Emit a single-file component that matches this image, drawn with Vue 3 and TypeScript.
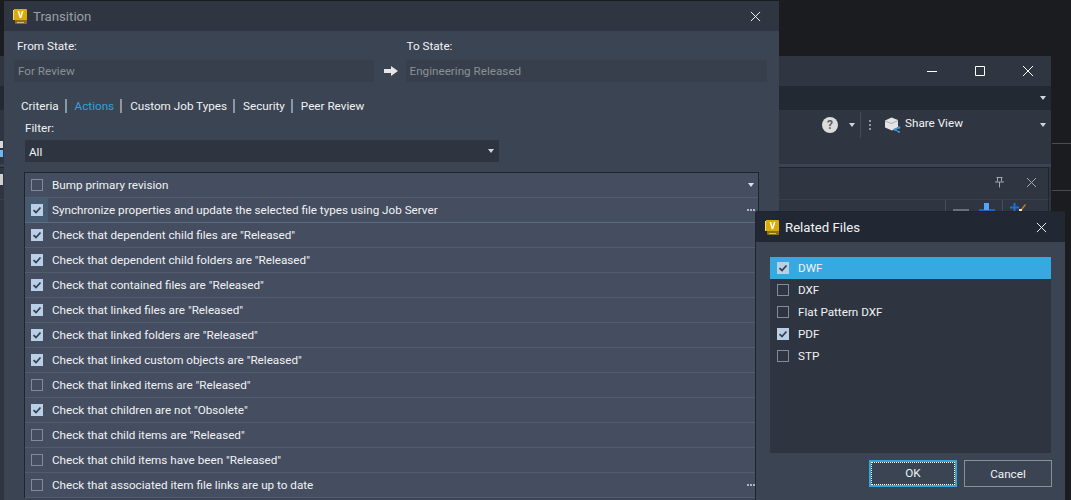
<script setup lang="ts">
interface Action {
  label: string;
  checked: boolean;
  more?: 'caret' | 'dots';
}

const tabs = ['Criteria', 'Actions', 'Custom Job Types', 'Security', 'Peer Review'];

const actions: Action[] = [
  { label: 'Bump primary revision', checked: false, more: 'caret' },
  { label: 'Synchronize properties and update the selected file types using Job Server', checked: true, more: 'dots' },
  { label: 'Check that dependent child files are "Released"', checked: true },
  { label: 'Check that dependent child folders are "Released"', checked: true },
  { label: 'Check that contained files are "Released"', checked: true },
  { label: 'Check that linked files are "Released"', checked: true },
  { label: 'Check that linked folders are "Released"', checked: true },
  { label: 'Check that linked custom objects are "Released"', checked: true },
  { label: 'Check that linked items are "Released"', checked: false },
  { label: 'Check that children are not "Obsolete"', checked: true },
  { label: 'Check that child items are "Released"', checked: false },
  { label: 'Check that child items have been "Released"', checked: false },
  { label: 'Check that associated item file links are up to date', checked: false, more: 'dots' },
];

const fileTypes = [
  { label: 'DWF', checked: true },
  { label: 'DXF', checked: false },
  { label: 'Flat Pattern DXF', checked: false },
  { label: 'PDF', checked: true },
  { label: 'STP', checked: false },
];
</script>

<template>
  <div class="desktop">
    <!-- main application window behind the dialogs -->
    <section class="window app">
      <header class="app-title">
        <svg class="win-btn" viewBox="0 0 12 12"><path d="M1 6.500h10" /></svg>
        <svg class="win-btn" viewBox="0 0 12 12"><path d="M1.500 1.500h9v9h-9z" /></svg>
        <svg class="win-btn" viewBox="0 0 12 12"><path d="M1 1l10 10M11 1L1 11" /></svg>
      </header>
      <div class="app-menu"><i class="caret"></i></div>
      <div class="app-tools">
        <span class="help">?</span>
        <i class="caret small"></i>
        <span class="tool-sep"></span>
        <span class="grip"><b></b><b></b><b></b></span>
        <svg class="share-icon" viewBox="0 0 17 17">
          <path d="M1 4.500 7.500 1.500 14 4v7l-6 3.500-7-3z" fill="#e3e3e3" />
          <path d="M1 4.500 7.500 7 14 4v1L7.500 8 1 5.500z" fill="#a9abae" />
          <path d="M15 11.500 11 13.500 15 16" fill="none" stroke="#3f9be0" stroke-width="1.200" />
          <circle cx="15" cy="11.500" r="1.300" fill="#3f9be0" />
          <circle cx="11" cy="13.500" r="1.300" fill="#3f9be0" />
          <circle cx="15" cy="16" r="1" fill="#3f9be0" />
        </svg>
        <span class="share-label">Share View</span>
        <i class="caret push"></i>
      </div>
      <div class="app-panel">
        <div class="panel-head">
          <svg class="pin" viewBox="0 0 11 11"><path d="M2.500.5h6M3.500.5v4M7.500.5v4M1 5h9M5.500 5v5.500" /></svg>
          <svg class="panel-close" viewBox="0 0 11 11"><path d="M1 1l9 9M10 1 1 10" /></svg>
        </div>
        <div class="panel-tools">
          <span class="tool-div"></span>
          <span class="tool-minus"></span>
          <svg class="tool-up" viewBox="0 0 16 8">
            <path d="M0 6h16v2H0z" fill="#1c64c4" />
            <path d="M5 0h5v7H5z" fill="#56a5f2" />
          </svg>
          <span class="tool-div"></span>
          <svg class="tool-add" viewBox="0 0 16 8">
            <path d="M0 3.500h9v2H0zM3.500 0h2v8h-2z" fill="#1c6fd8" />
            <path d="M11 6l4-5 1 1-4 5z" fill="#c67a3a" />
            <path d="M9 6h3v2H9z" fill="#f3e6b0" />
          </svg>
        </div>
      </div>
    </section>

    <span class="desk-line first"></span>
    <span class="desk-line second"></span>
    <span class="edge-chip white"></span>
    <span class="edge-chip blue"></span>
    <span class="edge-chip glyph"></span>

    <!-- Transition dialog -->
    <section class="window transition">
      <header class="title-bar">
        <svg class="vault-logo" viewBox="0 0 15 16">
          <path d="M1 2h1v10H1z" fill="#f0d98a" />
          <path d="M2 1h12a1 1 0 0 1 1 1v10H2z" fill="#dcaa06" />
          <path d="M3 12h12v3a1 1 0 0 1-1 1H4a1 1 0 0 1-1-1z" fill="#8c7114" />
          <path d="M5 14h7v1H5z" fill="#c9bd8c" />
          <path d="M5.500 3h1.700l1.300 5 1.300-5h1.700l-2.200 7H7.700z" fill="#fff" />
        </svg>
        <h1 class="dim-title">Transition</h1>
        <svg class="close" viewBox="0 0 12 12"><path d="M1 1l10 10M11 1 1 11" /></svg>
      </header>

      <div class="transition-body">
        <div class="states">
          <div class="state from">
            <label>From State:</label>
            <div class="state-input">For Review</div>
          </div>
          <svg class="state-arrow" viewBox="0 0 14 10"><path d="M0 3h7V0l7 5-7 5V7H0z" /></svg>
          <div class="state to">
            <label>To State:</label>
            <div class="state-input">Engineering Released</div>
          </div>
        </div>

        <nav class="tabs">
          <template v-for="(tab, i) in tabs" :key="tab">
            <span class="tab" :class="{ active: tab === 'Actions' }">{{ tab }}</span>
            <span v-if="i < tabs.length - 1" class="tab-sep"></span>
          </template>
        </nav>

        <div class="filter">
          <label>Filter:</label>
          <div class="select"><span class="select-text">All</span><i class="caret"></i></div>
        </div>

        <div class="grid">
          <div v-for="(row, i) in actions" :key="row.label" class="grid-row" :class="{ current: i === 1 }">
            <span class="check-cell">
              <span class="check" :class="{ on: row.checked }">
                <svg v-if="row.checked" viewBox="0 0 12 12"><path d="M2.500 6.200 5 8.500l4.500-5" /></svg>
              </span>
            </span>
            <span class="grid-label">{{ row.label }}</span>
            <i v-if="row.more === 'caret'" class="caret pale"></i>
            <span v-else-if="row.more === 'dots'" class="dots"><b></b><b></b><b></b></span>
          </div>
        </div>
      </div>
    </section>

    <!-- Related Files dialog -->
    <section class="window related">
      <header class="title-bar dark">
        <svg class="vault-logo" viewBox="0 0 15 16">
          <path d="M1 2h1v10H1z" fill="#f0d98a" />
          <path d="M2 1h12a1 1 0 0 1 1 1v10H2z" fill="#dcaa06" />
          <path d="M3 12h12v3a1 1 0 0 1-1 1H4a1 1 0 0 1-1-1z" fill="#8c7114" />
          <path d="M5 14h7v1H5z" fill="#c9bd8c" />
          <path d="M5.500 3h1.700l1.300 5 1.300-5h1.700l-2.200 7H7.700z" fill="#fff" />
        </svg>
        <h1>Related Files</h1>
        <svg class="close" viewBox="0 0 12 12"><path d="M1 1l10 10M11 1 1 11" /></svg>
      </header>
      <div class="related-body">
        <ul class="file-list">
          <li v-for="(file, i) in fileTypes" :key="file.label" class="file-row" :class="{ selected: i === 0 }">
            <span class="check" :class="{ on: file.checked }">
              <svg v-if="file.checked" viewBox="0 0 12 12"><path d="M2.500 6.200 5 8.500l4.500-5" /></svg>
            </span>
            {{ file.label }}
          </li>
        </ul>
        <div class="buttons">
          <button class="btn default"><span>OK</span></button>
          <button class="btn">Cancel</button>
        </div>
      </div>
    </section>
  </div>
</template>

<style>
html,
body {
  margin: 0;
  background: #1b1c1f;
  overflow: hidden;
}
</style>

<style scoped>
.desktop {
  position: relative;
  width: 1071px;
  height: 500px;
  overflow: hidden;
  background: #1b1c1f;
  color: #f0f2f5;
  font: 11.700px Roboto, "Open Sans", sans-serif;
}

.window {
  position: absolute;
  box-sizing: border-box;
  display: flex;
  flex-direction: column;
}

.desk-line {
  position: absolute;
  left: 1052px;
  width: 19px;
  height: 1px;
  background: #4a4c50;
}

.desk-line.first {
  top: 143px;
}

.desk-line.second {
  top: 190px;
}

.edge-chip {
  position: absolute;
  left: 0;
  width: 3px;
}

.edge-chip.white {
  top: 141px;
  height: 7px;
  background: #d8d8d8;
}

.edge-chip.blue {
  top: 150px;
  height: 7px;
  background: #6fb7f0;
}

.edge-chip.glyph {
  top: 174px;
  height: 11px;
  background: #d0d0d0;
}

.caret {
  display: block;
  width: 0;
  height: 0;
  border: 3px solid transparent;
  border-top: 4px solid #d2d5da;
  border-bottom: 0;
}

/* background application */
.app {
  left: 0;
  top: 56px;
  width: 1051px;
  height: 444px;
  background: #2f3642;
}

.app-title {
  height: 30px;
  flex: none;
  display: flex;
  justify-content: flex-end;
  align-items: center;
  gap: 36px;
  padding-right: 17px;
}

.win-btn {
  width: 12px;
  height: 12px;
  fill: none;
  stroke: #fff;
  stroke-width: 1;
}

.app-menu {
  height: 24px;
  flex: none;
  background: #232933;
  display: flex;
  justify-content: flex-end;
  align-items: center;
  padding-right: 5px;
}

.app-tools {
  height: 52px;
  flex: none;
  display: flex;
  align-items: flex-start;
  padding: 2px 5px 0 822px;
}

.help {
  width: 16px;
  height: 16px;
  margin-top: 5px;
  border-radius: 50%;
  background: #dcdcdc;
  color: #5d6168;
  font-weight: 700;
  font-size: 12px;
  line-height: 16px;
  text-align: center;
}

.small {
  margin: 11px 0 0 11px;
}

.tool-sep {
  width: 1px;
  height: 26px;
  margin-left: 5px;
  background: #444c5a;
}

.grip {
  display: flex;
  flex-direction: column;
  gap: 2px;
  margin: 8px 0 0 8px;
}

.grip b {
  width: 2px;
  height: 2px;
  background: #8f959f;
}

.share-icon {
  width: 17px;
  height: 17px;
  margin: 4px 0 0 13px;
}

.share-label {
  margin: 2px 0 0 4px;
  line-height: 18px;
}

.app-tools .push {
  margin: 11px 0 0 auto;
}

.app-panel {
  flex: 1;
  border-top: 3px solid #3b4452;
  box-sizing: border-box;
}

.panel-head {
  height: 32px;
  border-top: 1px solid #20242c;
  border-right: 1px solid #20242c;
  margin-right: 2px;
  box-sizing: border-box;
  display: flex;
  justify-content: flex-end;
  align-items: center;
  gap: 21px;
  padding: 0 11px 2px 0;
}

.pin,
.panel-close {
  width: 11px;
  height: 11px;
  fill: none;
  stroke: #a4a8ae;
  stroke-width: 1;
}

.panel-tools {
  display: flex;
  align-items: flex-start;
  height: 14px;
  margin-right: 2px;
  border-top: 1px solid #38404c;
  border-right: 1px solid #20242c;
  padding-left: 945px;
}

.tool-div {
  width: 1px;
  height: 14px;
  background: #454d5a;
}

.tool-minus {
  width: 16px;
  height: 2px;
  margin: 9px 0 0 7px;
  background: #6a7078;
}

.tool-up {
  width: 16px;
  height: 8px;
  margin: 3px 7px 0 10px;
}

.tool-add {
  width: 16px;
  height: 8px;
  margin: 3px 0 0 7px;
}

/* dialogs */
.title-bar {
  height: 30px;
  flex: none;
  display: flex;
  align-items: center;
  padding: 0 18px 0 8px;
  background: #2f3642;
}

.title-bar.dark {
  background: #222833;
}

.title-bar h1 {
  margin: 0 0 0 6px;
  font: inherit;
  font-size: 13.200px;
  font-weight: 400;
  flex: 1;
}

.title-bar h1.dim-title {
  color: #9a9fa6;
}

.vault-logo {
  width: 15px;
  height: 16px;
  flex: none;
}

.close {
  width: 11px;
  height: 11px;
  fill: none;
  stroke: #fff;
  stroke-width: 1;
}

.transition {
  left: 4px;
  top: 1px;
  width: 775px;
  height: 520px;
  background: #3b4452;
}

.transition-body {
  display: flex;
  flex-direction: column;
  padding: 7px 12px 0 10px;
}

.states {
  display: flex;
  align-items: flex-end;
}

.state {
  display: flex;
  flex-direction: column;
}

.state label {
  margin: 0 0 5px 3px;
  line-height: 17px;
}

.state.to label {
  margin-left: 1px;
}

.state-input {
  height: 22px;
  line-height: 22px;
  padding-left: 4px;
  background: #363f4b;
  color: #8a9098;
}

.from {
  width: 360px;
}

.to {
  width: 362px;
}

.state-arrow {
  width: 14px;
  height: 10px;
  margin: 0 8px 6px 10px;
  fill: #e6e6e6;
}

.tabs {
  display: flex;
  align-items: center;
  height: 20px;
  margin: 14px 0 0 7px;
}

.tab.active {
  color: #33a1d6;
}

.tab-sep {
  width: 2px;
  height: 14px;
  margin: 0 8px 0 6px;
  background: #8f96a0;
}

.filter {
  margin: 4px 0 0 11px;
}

.filter label {
  display: block;
  line-height: 17px;
  margin-bottom: 3px;
}

.select {
  width: 474px;
  height: 22px;
  box-sizing: border-box;
  display: flex;
  align-items: center;
  justify-content: space-between;
  padding: 0 5px 0 4px;
  background: #2e3540;
}

.select-text {
  padding-top: 1px;
}

.grid {
  margin: 10px 0 0 10px;
  width: 735px;
  box-sizing: border-box;
  border: solid #20252d;
  border-width: 1px 1px 0;
  background: #454e60;
}

.grid-row {
  height: 25px;
  box-sizing: border-box;
  display: flex;
  align-items: center;
  border-bottom: 1px solid #525c6e;
  padding-right: 4px;
}

.grid-row.current {
  border-bottom-color: #5b6b82;
}

.check-cell {
  width: 23px;
  height: 100%;
  flex: none;
  display: flex;
  align-items: center;
  justify-content: center;
  padding-left: 1px;
  box-sizing: border-box;
}

.current .check-cell {
  background: #465a70;
}

.check {
  width: 12px;
  height: 12px;
  box-sizing: border-box;
  flex: none;
  border: 1px solid #7f8c9e;
}

.check.on {
  border: 0;
  background: #b9cfe8;
}

.check svg {
  display: block;
  width: 12px;
  height: 12px;
  fill: none;
  stroke: #39404c;
  stroke-width: 1.800;
}

.grid-label {
  flex: 1;
  margin-left: 4px;
}

.pale {
  border-top-color: #d8e2ee;
}

.dots {
  display: flex;
  gap: 1px;
  margin-right: -1px;
}

.dots b {
  width: 2px;
  height: 2px;
  background: #a8b6c8;
}

/* related files */
.related {
  left: 756px;
  top: 212px;
  width: 309px;
  height: 300px;
  background: #3b4452;
  box-shadow: -1px 0 0 #20252d, 0 -1px 0 #20252d;
}

.related-body {
  padding: 15px 13px 0 14px;
}

.file-list {
  list-style: none;
  margin: 0;
  padding: 0;
  height: 196px;
  width: 281px;
  background: #2e3540;
}

.file-row {
  height: 22px;
  display: flex;
  align-items: center;
  gap: 9px;
  padding-left: 7px;
  box-sizing: border-box;
}

.file-row.selected {
  background: #36a9e1;
}

.buttons {
  display: flex;
  justify-content: flex-end;
  gap: 7px;
  margin: 7px 0 0 0;
}

.btn {
  width: 88px;
  height: 27px;
  padding: 0;
  background: transparent;
  border: 1px solid #8a9097;
  color: #f0f2f5;
  font: inherit;
}

.btn.default {
  border: 2px solid #33a6dc;
  padding: 0;
}

.btn.default span {
  display: block;
  height: 100%;
  line-height: 21px;
  box-sizing: border-box;
  border: 1px dotted #fff;
}
</style>
